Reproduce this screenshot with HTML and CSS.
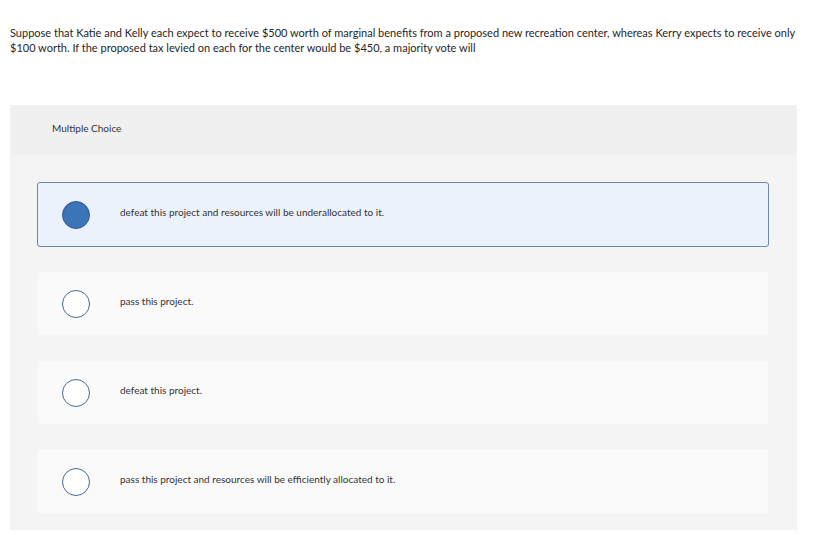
FILE: index.html
```html
<!DOCTYPE html>
<html>
<head>
<meta charset="utf-8">
<link rel="stylesheet" href="styles.css">
</head>
<body>
<div class="question">Suppose that Katie and Kelly each expect to receive $500 worth of marginal benefits from a proposed new recreation center, whereas Kerry expects to receive only $100 worth. If the proposed tax levied on each for the center would be $450, a majority vote will</div>
<div class="panel">
  <div class="panel-head">Multiple Choice</div>
  <div class="options">
    <div class="option selected"><span class="radio"></span><span class="label">defeat this project and resources will be underallocated to it.</span></div>
    <div class="option"><span class="radio"></span><span class="label">pass this project.</span></div>
    <div class="option"><span class="radio"></span><span class="label">defeat this project.</span></div>
    <div class="option"><span class="radio"></span><span class="label">pass this project and resources will be efficiently allocated to it.</span></div>
  </div>
</div>
</body>
</html>
```
FILE: styles.css
```css
* { box-sizing: border-box; }
body {
  margin: 0;
  background: #ffffff;
  font-family: Lato, "Open Sans", sans-serif;
  color: #222;
}
.question {
  padding: 25px 10px 0 10px;
  font-size: 11px;
  line-height: 15px;
  width: 812px;
  color: #262626;
}
.panel {
  margin: 50px 0 0 10px;
  width: 787px;
  background: #f4f4f4;
  padding-bottom: 16px;
}
.panel-head {
  height: 50px;
  background: #f0f0f0;
  padding-left: 42px;
  padding-bottom: 5px;
  display: flex;
  align-items: center;
  font-size: 10px;
  color: #333;
}
.options {
  display: flex;
  flex-direction: column;
  gap: 24px;
  padding: 27px 28px 0 27px;
}
.option {
  height: 65px;
  background: #fafafa;
  border: 1px solid #f6f6f6;
  border-radius: 3px;
  display: flex;
  align-items: center;
  padding-left: 24px;
  font-size: 10px;
  color: #333;
}
.option.selected {
  background: #ebf2fb;
  border: 1px solid #6f87a8;
}
.radio {
  width: 28px;
  height: 28px;
  border-radius: 50%;
  border: 1.5px solid #4a6b94;
  background: #fff;
  flex: none;
}
.selected .radio {
  background: #3c74b8;
  border-color: #2f5d94;
}
.label {
  margin-left: 30px;
  margin-bottom: 6px;
}
```
